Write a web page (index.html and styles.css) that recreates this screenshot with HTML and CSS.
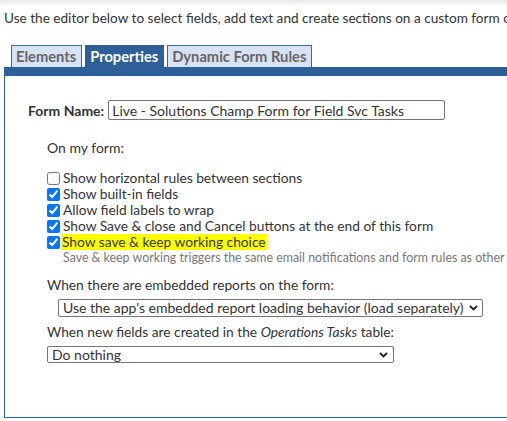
FILE: index.html
```html
<!DOCTYPE html>
<html lang="en">
<head>
  <meta charset="UTF-8" />
  <title>Form Properties</title>
  <link rel="stylesheet" href="styles.css">
</head>
<body>
  <p class="intro">Use the editor below to select fields, add text and create sections on a custom form or to change the form's properties.</p>

  <!-- Editor tabs -->
  <div class="tabs">
    <div class="tab">Elements</div>
    <div class="tab active">Properties</div>
    <div class="tab">Dynamic Form Rules</div>
  </div>
  <div class="tab-bar"></div>

  <div class="panel">
    <div class="name-row">
      <label for="formName">Form Name:</label>
      <input type="text" id="formName" class="name-input" value="Live - Solutions Champ Form for Field Svc Tasks">
    </div>

    <div class="options">
      <div class="options-title">On my form:</div>
      <label class="check-row"><input type="checkbox"> Show horizontal rules between sections</label>
      <label class="check-row"><input type="checkbox" checked> Show built-in fields</label>
      <label class="check-row"><input type="checkbox" checked> Allow field labels to wrap</label>
      <label class="check-row"><input type="checkbox" checked> Show Save &amp; close and Cancel buttons at the end of this form</label>
      <label class="check-row"><input type="checkbox" checked> <mark>Show save &amp; keep working choice</mark></label>
      <div class="hint">Save &amp; keep working triggers the same email notifications and form rules as other saves.</div>

      <div class="field-label">When there are embedded reports on the form:</div>
      <select class="select embedded">
        <option>Use the app's embedded report loading behavior (load separately)</option>
        <option>Load with the form</option>
      </select>

      <div class="field-label new-fields">When new fields are created in the <em>Operations Tasks</em> table:</div>
      <select class="select new-field">
        <option>Do nothing</option>
        <option>Add them to this form</option>
      </select>
    </div>
  </div>
</body>
</html>
```

FILE: styles.css
```css
* {
  box-sizing: border-box;
}
body {
  margin: 0;
  font-family: Lato, 'Noto Sans', sans-serif;
  font-size: 13.75px;
  color: #333;
  background: linear-gradient(#e9e9e9, #fff 7px) no-repeat;
  overflow: hidden;
}
.intro {
  margin: 0;
  padding: 10px 0 0 4px;
  font-size: 13.6px;
  line-height: 17px;
  white-space: nowrap;
}
.tabs {
  display: flex;
  gap: 3px;
  margin-top: 18px;
  padding-left: 11px;
}
.tab {
  height: 22px;
  line-height: 21px;
  padding: 0 5px 0 4px;
  border: 1px solid #3b67a3;
  border-bottom: none;
  background-color: #d7e2f3;
  color: #666;
  font-size: 14.7px;
  font-weight: bold;
}
.tab.active {
  background-color: #2e5f98;
  border-color: #2e5f98;
  color: #fff;
}
.tab-bar {
  height: 9px;
  margin-left: 4px;
  background-color: #2e5f98;
}
.panel {
  height: 342px;
  margin-left: 4px;
  border-left: 1px solid #2e5f98;
  border-bottom: 1px solid #2e5f98;
  padding: 24px 0 0 23px;
}
.name-row {
  display: flex;
  align-items: center;
  gap: 4px;
}
.name-row label {
  font-size: 14px;
  font-weight: bold;
}
.name-input {
  width: 337px;
  height: 20px;
  padding: 0 3px;
  border: 1px solid #767676;
  border-radius: 2px;
  font-family: inherit;
  font-size: 14px;
  color: #333;
}
.options {
  padding-left: 19px;
  line-height: 16px;
}
.options-title {
  margin-top: 20px;
  margin-bottom: 14px;
  font-size: 14px;
}
.check-row {
  display: flex;
  align-items: center;
  height: 16px;
  white-space: nowrap;
}
.check-row input {
  width: 13px;
  height: 13px;
  margin: 0 3px 0 0;
}
.check-row mark {
  background-color: #ffff00;
  color: #333;
  padding: 0 1px;
  margin-left: -2px;
}
.hint {
  padding-left: 16px;
  font-size: 12.4px;
  color: #777;
  white-space: nowrap;
}
.field-label {
  margin-top: 11px;
}
.field-label.new-fields {
  margin-top: 7px;
}
.select {
  display: block;
  appearance: none;
  margin-top: 6px;
  padding: 0 16px 0 4px;
  border: 1px solid #767676;
  border-radius: 2px;
  background: #fff url("data:image/svg+xml,%3Csvg xmlns='http://www.w3.org/2000/svg' width='9' height='6' viewBox='0 0 9 6'%3E%3Cpath d='M1 1l3.5 3.5L8 1' fill='none' stroke='%23222' stroke-width='1.8'/%3E%3C/svg%3E") no-repeat;
  font-family: inherit;
  font-size: 14px;
  line-height: 16px;
  color: #333;
}
.select.embedded {
  width: 425px;
  height: 18px;
  margin-left: 11px;
  background-position: right 4px center;
}
.select.new-field {
  width: 347px;
  height: 17px;
  background-position: right 5px center;
}
```
